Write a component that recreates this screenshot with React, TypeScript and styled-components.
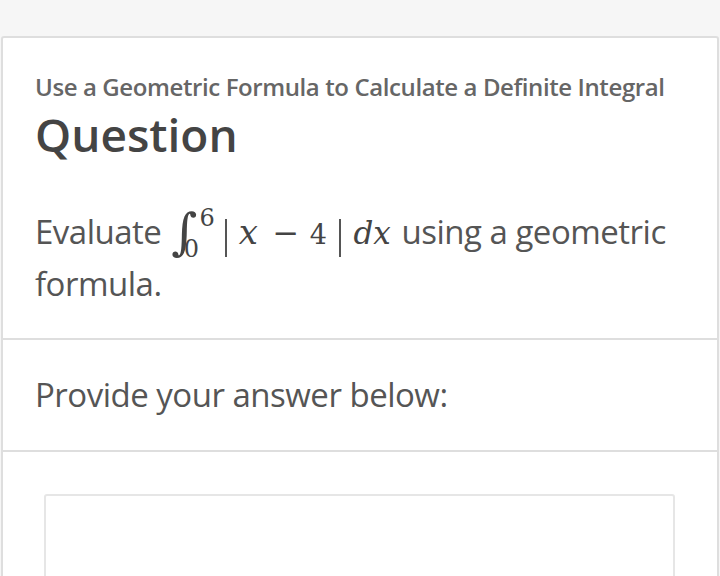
import React from "react";
import styled, { createGlobalStyle } from "styled-components";

const Global = createGlobalStyle`
  html, body { margin: 0; padding: 0; background: #f6f6f6; }
  body { font-family: "Open Sans", "Noto Sans", sans-serif; }
`;

const Page = styled.div`
  width: 720px;
  height: 576px;
  overflow: hidden;
  padding-top: 36px;
  box-sizing: border-box;
  background: #f6f6f6;
`;

const Card = styled.div`
  margin: 0 1px;
  background: #fff;
  border: 2px solid #dedede;
  border-radius: 3px;
  height: 600px;
`;

const Section = styled.div<{ $h: number; $pt: number; $last?: boolean }>`
  height: ${(p) => p.$h}px;
  padding: ${(p) => p.$pt}px 32px 0 32px;
  box-sizing: border-box;
  border-bottom: ${(p) => (p.$last ? "none" : "2px solid #dedede")};
`;

const Subtitle = styled.div`
  font-size: 24px;
  font-weight: 600;
  color: #666;
  line-height: 32px;
  letter-spacing: -0.4px;
`;

const Heading = styled.h1`
  margin: 3px 0 0;
  font-size: 46px;
  font-weight: 600;
  color: #444;
  line-height: 56px;
  letter-spacing: 0;
`;

const Body = styled.p<{ $mt: number }>`
  margin: ${(p) => p.$mt}px 0 0;
  font-size: 33px;
  color: #555;
  line-height: 52px;
  letter-spacing: -0.5px;
`;

const Formula = styled.span`
  font-family: "DejaVu Serif", "Liberation Serif", serif;
  font-size: 24px;
  line-height: 1;
  color: #444;
  letter-spacing: 0;
  margin-left: 2px;
`;

const Glyph = styled.span<{
  $w: number;
  $ml?: number;
  $italic?: boolean;
  $size?: number;
  $shift?: number;
  $align?: string;
}>`
  display: inline-block;
  width: ${(p) => p.$w}px;
  margin-left: ${(p) => p.$ml ?? 0}px;
  font-family: "DejaVu Serif", "Liberation Serif", serif;
  font-style: ${(p) => (p.$italic ? "italic" : "normal")};
  font-weight: 300;
  font-size: ${(p) => p.$size ?? 24}px;
  vertical-align: ${(p) => p.$shift ?? 0}px;
  line-height: 0;
  text-align: ${(p) => p.$align ?? "center"};
  white-space: nowrap;
`;

const IntSign = styled.span`
  display: inline-block;
  width: 14px;
  font-family: "DejaVu Serif", serif;
  font-style: italic;
  font-size: 50px;
  line-height: 0;
  vertical-align: -5px;
  text-align: left;
  white-space: nowrap;
`;

const Bar = styled.span<{ $ml: number }>`
  display: inline-block;
  width: 1.5px;
  height: 38px;
  background: #555;
  vertical-align: -13px;
  margin-left: ${(p) => p.$ml}px;
`;

const Answer = styled.div`
  margin-top: 42px;
  margin-left: 9px;
  width: 631px;
  height: 120px;
  box-sizing: border-box;
  border: 2px solid #e6e6e6;
  border-radius: 3px;
`;

export default function App() {
  return (
    <>
      <Global />
      <Page>
        <Card>
          <Section $h={302} $pt={33}>
            <Subtitle>Use a Geometric Formula to Calculate a Definite Integral</Subtitle>
            <Heading>Question</Heading>
            <Body $mt={44}>
              Evaluate{" "}
              <Formula>
                <IntSign>∫</IntSign>
                <Glyph $w={16} $ml={-2} $size={24} $shift={-13}>0</Glyph>
                <Glyph $w={15} $size={24} $shift={18}>6</Glyph>
                <Bar $ml={11} />
                <Glyph $w={20} $ml={11.5} $italic $size={34}>x</Glyph>
                <Glyph $w={23} $ml={14} $size={32}>−</Glyph>
                <Glyph $w={20} $ml={13} $size={27}>4</Glyph>
                <Bar $ml={11} />
                <Glyph $w={40} $ml={12.5} $italic $size={31} $align="left">dx</Glyph>
              </Formula>{" "}
              using a geometric formula.
            </Body>
          </Section>
          <Section $h={112} $pt={29}>
            <Body $mt={0}>Provide your answer below:</Body>
          </Section>
          <Section $h={200} $pt={0} $last>
            <Answer />
          </Section>
        </Card>
      </Page>
    </>
  );
}
